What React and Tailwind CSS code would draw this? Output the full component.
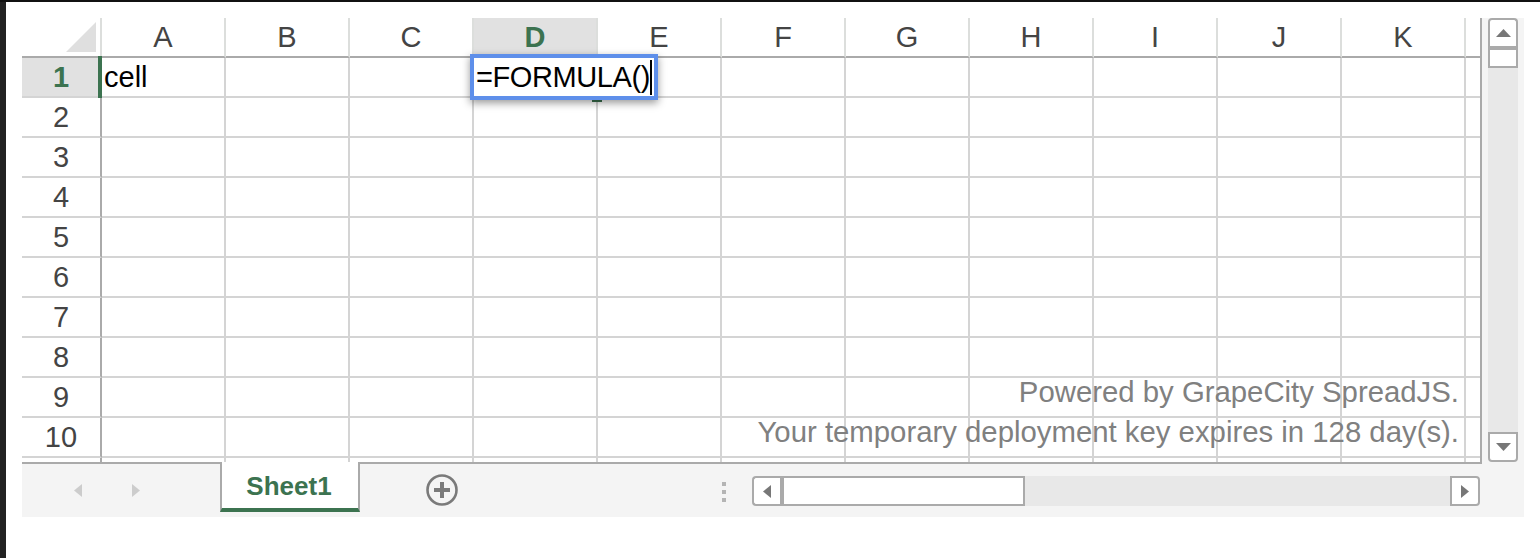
const COLS = ["A", "B", "C", "D", "E", "F", "G", "H", "I", "J", "K", ""];
const ROWS = [1, 2, 3, 4, 5, 6, 7, 8, 9, 10];

function Tri({ dir, className }) {
  const pts = {
    up: "0,8 7.5,0 15,8",
    down: "0,0 15,0 7.5,8",
    left: "8,0 8,13 0,6.5",
    right: "0,0 0,13 8,6.5",
  }[dir];
  const vertical = dir === "up" || dir === "down";
  return (
    <svg width={vertical ? 15 : 8} height={vertical ? 8 : 13} viewBox={vertical ? "0 0 15 8" : "0 0 8 13"} className={className}>
      <polygon points={pts} fill="currentColor" />
    </svg>
  );
}

function HeaderCell({ label, index }) {
  const active = label === "D";
  const last = index === COLS.length - 1;
  return (
    <div
      className={`flex items-center justify-center border-b-2 border-b-[#aaaaaa] text-[29px] leading-none ${last ? "" : "border-r-2 border-r-[#dcdedc]"} ${active ? "bg-[#e1e1e1] font-bold text-[#3c7350]" : "text-[#444444]"}`}
    >
      {label}
    </div>
  );
}

function Row({ n }) {
  const active = n === 1;
  return (
    <>
      <div
        className={`flex items-center justify-center border-b-2 border-b-[#d4d4d4] border-r-2 text-[29px] leading-none ${active ? "border-r-[#3c7350] bg-[#e1e1e1] font-bold text-[#3c7350]" : "border-r-[#aaaaaa] text-[#444444]"}`}
      >
        {n}
      </div>
      {COLS.map((c, i) => (
        <div
          key={c + i}
          className={`flex items-center border-b-2 border-b-[#d4d4d4] pl-0.5 text-[29px] leading-none text-black ${i === COLS.length - 1 ? "" : "border-r-2 border-r-[#d4d4d4]"}`}
        >
          {n === 1 && i === 0 ? "cell" : ""}
        </div>
      ))}
    </>
  );
}

function Grid() {
  return (
    <div className="relative h-[444px] w-[1460px] border-r-2 border-r-[#aaaaaa]">
      <div className="grid h-full grid-cols-[80px_repeat(11,124px)_14px] grid-rows-[repeat(11,40px)_4px] overflow-hidden">
        <div className="flex items-end justify-end border-b-2 border-b-[#aaaaaa] border-r-2 border-r-[#dcdedc] pb-1 pr-1">
          <svg width="30" height="30" viewBox="0 0 30 30">
            <polygon points="30,0 30,30 0,30" fill="#dfdfdf" />
          </svg>
        </div>
        {COLS.map((c, i) => (
          <HeaderCell key={c + i} label={c} index={i} />
        ))}
        {ROWS.map((n) => (
          <Row key={n} n={n} />
        ))}
        <div className="border-r-2 border-r-[#aaaaaa]" />
        {COLS.map((c, i) => (
          <div key={c + i} className={i === COLS.length - 1 ? "" : "border-r-2 border-r-[#d4d4d4]"} />
        ))}
      </div>

      <div className="absolute left-[76px] top-[38px] h-[42px] w-1 bg-[#3c7350]" />
      <div className="absolute left-[570px] top-[80px] h-[4px] w-[10px] bg-[#3c7350]" />

      <div className="absolute left-[448px] top-[36px] flex h-[46px] w-[188px] items-center border-4 border-[#5e8fea] bg-white pl-0.5 text-[29px] leading-none tracking-[-0.4px] text-black shadow-[0_3px_8px_rgba(0,0,0,0.4)]">
        <span>=FORMULA()</span>
        <span className="h-[35px] w-0.5 bg-black" />
      </div>

      <div className="absolute right-[21px] top-[354px] flex flex-col items-end text-[29.33px] leading-[40px] text-[#808080]">
        <span>Powered by GrapeCity SpreadJS.</span>
        <span>Your temporary deployment key expires in 128 day(s).</span>
      </div>
    </div>
  );
}

function VerticalScroll() {
  return (
    <div className="flex h-[444px] w-[42px] flex-col bg-[#f4f4f4] px-1.5">
      <div className="flex h-[28px] items-center justify-center rounded-t-[4px] border-x-2 border-t-2 border-[#aaaaaa] bg-white text-[#777777]">
        <Tri dir="up" />
      </div>
      <div className="h-[22px] border-2 border-t-4 border-[#aaaaaa] bg-white" />
      <div className="flex-1 bg-[#e8e8e8]" />
      <div className="flex h-[30px] items-center justify-center rounded-b-[4px] border-2 border-[#aaaaaa] bg-white text-[#777777]">
        <Tri dir="down" />
      </div>
    </div>
  );
}

function BottomBar() {
  return (
    <div className="flex h-[55px] items-start bg-[#f4f4f4]">
      <div className="flex h-[55px] w-[198px] items-center gap-[50px] border-t-2 border-t-[#aaaaaa] pl-[52px] text-[#cccccc]">
        <Tri dir="left" />
        <Tri dir="right" />
      </div>
      <div className="flex h-[50px] w-[140px] items-center justify-center border-x-2 border-b-4 border-x-[#aaaaaa] border-b-[#3c7350] bg-white pr-0.5 pt-0.5 text-[26px] font-bold leading-none text-[#3c7350]">
        Sheet1
      </div>
      <div className="flex h-[55px] w-[1122px] items-start border-t-2 border-t-[#aaaaaa]">
        <div className="ml-[66px] mt-[10px] flex h-[32px] w-8 items-center justify-center">
          <svg width="32" height="32" viewBox="0 0 32 32" fill="none" stroke="#7a7a7a">
            <circle cx="16" cy="16" r="14.5" strokeWidth="2.6" />
            <path d="M16 8v16M8 16h16" strokeWidth="4" />
          </svg>
        </div>
        <div className="ml-[264px] mt-[18px] flex h-[20px] w-1 flex-col justify-between">
          <span className="h-1 w-1 bg-[#b4b4b4]" />
          <span className="h-1 w-1 bg-[#b4b4b4]" />
          <span className="h-1 w-1 bg-[#b4b4b4]" />
        </div>
        <div className="ml-[26px] mt-3 flex h-[30px] w-[728px]">
          <div className="flex w-7 items-center justify-center rounded-l-[4px] border-y-2 border-l-2 border-[#aaaaaa] bg-white text-[#777777]">
            <Tri dir="left" />
          </div>
          <div className="w-[245px] border-2 border-l-4 border-[#aaaaaa] bg-white" />
          <div className="flex-1 bg-[#e8e8e8]" />
          <div className="flex w-[30px] items-center justify-center rounded-r-[4px] border-2 border-[#aaaaaa] bg-white text-[#777777]">
            <Tri dir="right" />
          </div>
        </div>
      </div>
    </div>
  );
}

export default function App() {
  return (
    <div className="flex h-[558px] w-[1540px] flex-col overflow-hidden bg-white font-['Liberation_Sans',Arial,sans-serif]">
      <div className="h-0.5 bg-[#111111]" />
      <div className="flex flex-1">
        <div className="w-1.5 bg-[#222222]" />
        <div className="ml-4 mt-4 w-[1502px]">
          <div className="flex">
            <Grid />
            <VerticalScroll />
          </div>
          <BottomBar />
        </div>
      </div>
    </div>
  );
}
